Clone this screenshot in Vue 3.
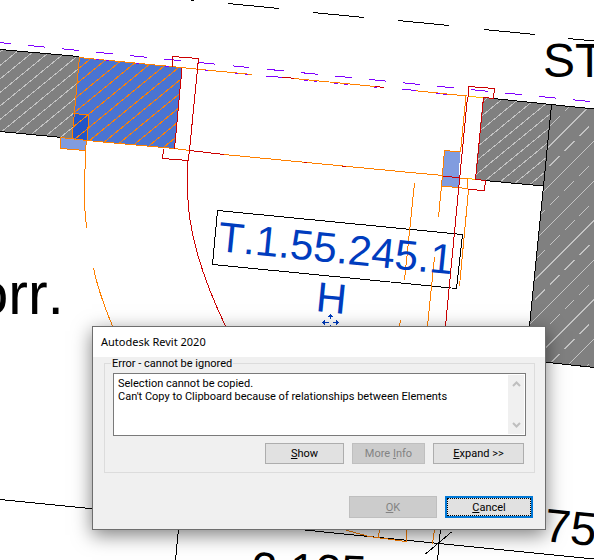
<script setup>
import { ref } from 'vue'

const message = ref(
  "Selection cannot be copied.\nCan't Copy to Clipboard because of relationships between Elements"
)

// Diagonal fill lines of the cut walls: y = c - slope * x
const hatch = (from, to, step, slope, x1, x2) => {
  const lines = []
  for (let c = from; c <= to; c += step) {
    lines.push(`M${x1} ${c - slope * x1}L${x2} ${c - slope * x2}`)
  }
  return lines.join('')
}
const wallHatch = hatch(52, 300, 13.5, 0.82, 0, 182)
const pierHatch = hatch(484, 650, 13.5, 0.82, 470, 555)
const solidHatch = hatch(656, 980, 39.6, 1, 520, 600)
const brokenHatch = hatch(676, 980, 39.6, 1, 520, 600)
</script>

<template>
  <main class="workspace">
    <svg class="plan" width="594" height="560" viewBox="0 0 594 560" role="img" aria-label="Floor plan">
      <defs>
        <clipPath id="wall-left"><path d="M0 49L79 57L72 139L61 137L0 132Z" /></clipPath>
        <clipPath id="wall-blue"><path d="M79 57L182 68L174 149L72 139Z" /></clipPath>
        <clipPath id="pier"><path d="M483 97L551 105L543 186L475 179Z" /></clipPath>
        <clipPath id="wall-right"><path d="M551 105L600 110V368L526 360L543 187Z" /></clipPath>
      </defs>

      <g class="crisp">
        <path class="grey" d="M0 49L79 57L72 139L61 137L0 132Z" />
        <path class="grey" d="M483 97L600 110V368L526 360L543 186L475 179Z" />
        <path class="blue" d="M79 57L182 68L174 149L72 139Z" />
        <path class="deep" d="M73.500 113.500L89 115L87 140L71.500 138Z" />
        <path class="pale" d="M61 137.500L87 140.500L85.500 150.500L60.500 148.500Z" />
        <path class="pale" d="M444.500 150.500L460 151.500L458.500 187.500L441.500 186Z" />

        <path class="hatch" clip-path="url(#wall-left)" :d="wallHatch" />
        <path class="orange" clip-path="url(#wall-blue)" :d="wallHatch" />
        <path class="hatch" clip-path="url(#pier)" :d="pierHatch" />
        <path class="hatch" clip-path="url(#wall-right)" :d="solidHatch" />
        <path class="hatch broken" clip-path="url(#wall-right)" :d="brokenHatch" />

        <path class="black" d="M0 49.500L79 56.500M0 131.500L62 137.500" />
        <path class="black" d="M493 98.500L551 104.500L594 109M551.500 105L543.500 186L542.500 196L529.500 326L526 360L594 367.500M485 180.500L543 186" />
        <path class="black" d="M191 .5H194M228 3.500L279 8.500M313 12.500L364 17.500M398 20.500L449 25.500M484 29.500L535 34.500M568 38.500L594 41" />
        <path class="black" d="M0 499.500L594 559M178.500 529L175.500 560M440.500 529L437.500 560M425.500 554L451.500 532" />
        <path class="black" d="M217.500 210.500L462.500 234.500L456.500 288.500L212.500 264.500Z" />

        <path class="purple dashes" d="M-6 42L600 102.500" />
        <path class="orange" d="M79 57.500L252 74.500M294 78.500L375 86.500M413 90.500L467 96" />
        <path class="purple" d="M96 59.500H99M106 60.500H109M136 63.500H139M165 66.500H169M205 70.500H208M235 73.500H238M245 74.500H248M266 76.500H274L282 77.500M304 80.500H308M314 81.500H317M334 83.500H338M344 84.500H348M374 87.500H377M402 89.500H405L416 90.500M436 93.500H440M443 94.500H447" />
        <path class="red" d="M282 77.500H288L294 78.500M375 86.500L384 87.500" />
        <path class="orange" d="M79.500 57L72 139M73.500 113.500L89 115L87 140M61 137.500L87 140.500L174 148.500L190 150.500M61 137.500L60.500 148.500L85.500 150.500" />
        <path class="orange" d="M224 154.500L400 171.500L443 175.500" />
        <path class="orange" d="M86.500 141L85.500 150V168L84.500 170V205L86.500 228M93.500 268Q98 291 112.500 326" />
        <path class="orange" d="M466 96L460.500 152L444.500 150.500L441.500 186L467.500 188.500V178.500L460 178M468.500 190L459.500 286M414.500 183L404.500 280M441.500 186L438.500 217M434.500 257L427.500 326M400.500 320L399.500 326" />
        <path class="orange" d="M342 529L369 536.500L406 541.500V529M379.500 529L378.500 537.500M434.500 529L432.500 544" />
        <path class="amber" d="M468 96.500L483 97.500M468 178.500L476 179.500" />
        <path class="red" d="M172.500 67V56.500L198.500 58.500L189.500 150L187.500 165V190Q188 248 225.500 326M182 68L174.500 149M163.500 149L162.500 158.500L188.500 160.500M190 150.500L224 154.500M304 162.500H307M342 166.500H346" />
        <path class="red" d="M468.500 97V86.500L494.500 88.500L493.500 98.500L483.500 97.500L475.500 179.500M467.500 97L459.500 180L445.500 326M443 176.500L460 177.500M475.500 179.500L485.500 180.500L484.500 190.500L468.500 189.500" />

        <g class="grip">
          <path d="M330 314H331V315H332V316H333V317H331V319H330V317H328V316H329V315H330Z" />
          <path d="M322 322H323V321H324V320H325V322H329V323H325V325H324V324H323V323H322Z" />
          <path d="M339 322H338V321H337V320H336V322H333V323H336V325H337V324H338V323H339Z" />
          <path d="M330 325H331V327H330Z" />
        </g>
      </g>

      <text class="note" x="543" y="77" font-size="48">ST</text>
      <text class="note" x="64" y="314" font-size="59" text-anchor="end">orr.</text>
      <text class="note" transform="translate(543 541) rotate(5.7)" font-size="47">75</text>
      <text class="note" transform="translate(251 584) rotate(2)" font-size="46">2.125</text>
      <text class="tag" transform="translate(217 251) rotate(5.7)" font-size="42">T.1.55.245.1</text>
      <text class="tag" transform="translate(315 311) rotate(5.7)" font-size="42">H</text>
    </svg>

    <section class="dialog" role="dialog" aria-labelledby="dialog-title">
      <h1 id="dialog-title" class="title">Autodesk Revit 2020</h1>
      <div class="body">
        <fieldset class="group">
          <legend id="error-legend">Error - cannot be ignored</legend>
          <div class="message">
            <textarea v-model="message" readonly aria-labelledby="error-legend"></textarea>
            <div class="scroll" aria-hidden="true">
              <svg width="9" height="6" viewBox="0 0 9 6"><path d="M1 5L4.500 1.500L8 5" /></svg>
              <svg width="9" height="6" viewBox="0 0 9 6"><path d="M1 1L4.500 4.500L8 1" /></svg>
            </div>
          </div>
          <div class="actions">
            <button type="button" class="show"><u>S</u>how</button>
            <button type="button" class="info" disabled>More <u>I</u>nfo</button>
            <button type="button" class="expand"><u>E</u>xpand &gt;&gt;</button>
          </div>
        </fieldset>
        <div class="footer">
          <button type="button" disabled><u>O</u>K</button>
          <button type="button" class="default"><span><u>C</u>ancel</span></button>
        </div>
      </div>
    </section>
  </main>
</template>

<style>
body {
  margin: 0;
  background: #fff;
}
</style>

<style scoped>
.workspace {
  position: relative;
  min-height: 100vh;
  overflow: hidden;
  font-family: Roboto, "Noto Sans", sans-serif;
  font-size: 11px;
  line-height: 13px;
  color: #000;
}
.plan {
  display: block;
}
.crisp {
  shape-rendering: crispEdges;
  fill: none;
  stroke-width: 1;
}
.grey { fill: #808080; }
.blue { fill: #4a74d2; }
.deep { fill: #2456c8; }
.pale { fill: #819cdf; }
.hatch { stroke: #c4c4c4; }
.broken { stroke-dasharray: 14 7; }
.black { stroke: #000; }
.orange { stroke: #ff8000; }
.amber { stroke: #ffb800; }
.red { stroke: #cc0000; }
.purple { stroke: #7f00ff; }
.dashes { stroke-dasharray: 17 17.24; }
.grip { fill: #003cbe; }
.note,
.tag {
  font-family: "Liberation Sans", Arial, sans-serif;
  font-kerning: none;
}
.tag { fill: #003cbe; }

.dialog {
  position: absolute;
  top: 326px;
  left: 92px;
  right: 48px;
  box-sizing: border-box;
  border: 1px solid #6e6e6e;
  background: #f0f0f0;
  box-shadow: 0 5px 18px rgba(0, 0, 0, 0.5);
}
.title {
  margin: 0;
  padding: 0 8px;
  background: #fff;
  font-family: "Noto Sans", "Open Sans", sans-serif;
  font-size: 11px;
  font-weight: 400;
  line-height: 30px;
}
.body {
  padding: 0 10px 11px 11px;
}
.group {
  min-width: 0;
  margin: 0;
  padding: 3px 8px 8px;
  border: 1px solid #dcdcdc;
}
legend {
  margin-left: -2px;
  padding: 0 1px;
}
.message {
  display: flex;
  box-sizing: border-box;
  height: 63px;
  padding: 1px;
  border: 1px solid #7a7a7a;
  background: #fff;
}
textarea {
  flex: 1;
  min-width: 0;
  margin: 0;
  padding: 2px 3px;
  border: 0;
  outline: 0;
  resize: none;
  overflow: hidden;
  background: transparent;
  color: inherit;
  font: inherit;
}
.scroll {
  display: flex;
  flex-direction: column;
  align-items: center;
  justify-content: space-between;
  box-sizing: border-box;
  width: 16px;
  padding: 6px 0;
  background: #f0f0f0;
}
.scroll path {
  fill: none;
  stroke: #bfbfbf;
  stroke-width: 2;
}
.actions,
.footer {
  display: flex;
  justify-content: flex-end;
  gap: 8px;
}
.actions {
  padding: 7px 2px 0 0;
}
.footer {
  padding: 23px 2px 0 0;
}
button {
  box-sizing: border-box;
  width: 88px;
  height: 22px;
  padding: 0;
  border: 1px solid #adadad;
  border-radius: 0;
  background: #e1e1e1;
  color: #000;
  font: inherit;
}
.actions button { height: 21px; }
.actions .show { width: 79px; }
.actions .info { width: 73px; }
.actions .expand { width: 91px; }
button:disabled {
  border-color: #bfbfbf;
  background: #ccc;
  color: #838383;
}
.default {
  border: 2px solid #0078d7;
}
.default span {
  display: flex;
  align-items: center;
  justify-content: center;
  box-sizing: border-box;
  height: 18px;
  border: 1px dotted #000;
}
u {
  text-underline-offset: 1px;
}
</style>
